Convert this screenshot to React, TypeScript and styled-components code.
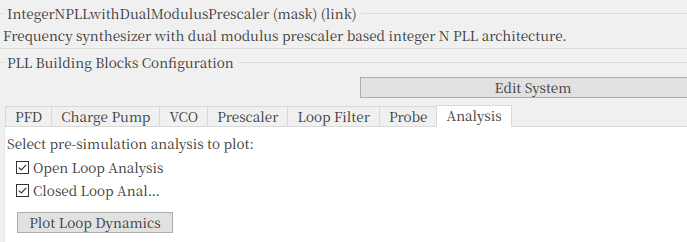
import React from "react"
import styled, { createGlobalStyle } from "styled-components"

const GlobalStyle = createGlobalStyle`
	html, body {
		margin: 0;
		padding: 0;
		background: #f0f0f0;
		overflow: hidden;
	}
	body {
		font-family: "Noto Serif CJK SC", "Liberation Serif", serif;
		font-size: 13.5px;
		color: #383838;
	}
`

const tabs = [
	"PFD",
	"Charge Pump",
	"VCO",
	"Prescaler",
	"Loop Filter",
	"Probe",
	"Analysis",
]

const Page = styled.div`
	width: 706px;
	height: 242px;
	padding-top: 4px;
	box-sizing: border-box;
	display: flex;
	flex-direction: column;
`

const GroupHeader = styled.div<{ $top?: number }>`
	display: flex;
	align-items: center;
	height: 18px;
	line-height: 18px;
	margin-top: ${(p) => p.$top ?? 0}px;
	white-space: nowrap;

	&::before {
		content: "";
		width: 5px;
		height: 1px;
		background: #dcdcdc;
		margin-right: 2px;
	}
	&::after {
		content: "";
		flex: 1;
		height: 1px;
		background: #dcdcdc;
		margin-left: 4px;
	}
`

const Description = styled.div`
	height: 18px;
	line-height: 18px;
	margin-top: 4px;
	padding-left: 3px;
	white-space: nowrap;
`

const Divider = styled.div`
	height: 1px;
	margin-top: 4px;
	background: #dcdcdc;
`

const ButtonRow = styled.div`
	display: grid;
	grid-template-columns: 360px 1fr;
	margin-top: 6px;
`

const PushButton = styled.button<{ $width?: string }>`
	font: inherit;
	letter-spacing: inherit;
	color: #383838;
	height: 21px;
	width: ${(p) => p.$width ?? "100%"};
	padding: 0;
	background: #e1e1e1;
	border: 1px solid #adadad;
	border-radius: 0;
	line-height: 19px;
	white-space: nowrap;
`

const TabArea = styled.div`
	flex: 1;
	margin-top: 7px;
	padding-left: 4px;
	display: flex;
	flex-direction: column;
`

const TabBar = styled.div`
	display: flex;
	align-items: flex-end;
	height: 21px;
	padding-left: 1px;
	position: relative;
	z-index: 1;
`

const Tab = styled.div<{ $active?: boolean }>`
	height: ${(p) => (p.$active ? 22 : 20)}px;
	line-height: 19px;
	padding: 0 9px;
	box-sizing: border-box;
	background: ${(p) => (p.$active ? "#ffffff" : "#f0f0f0")};
	border: 1px solid #d9d9d9;
	border-bottom: none;
	margin-left: -1px;
	margin-bottom: ${(p) => (p.$active ? -1 : 0)}px;
	white-space: nowrap;
	&:first-child {
		margin-left: 0;
	}
`

const Panel = styled.div`
	flex: 1;
	background: #ffffff;
	border-top: 1px solid #d9d9d9;
	border-left: 1px solid #e6e6e6;
	padding-left: 2px;
	display: flex;
	flex-direction: column;
`

const Prompt = styled.div`
	height: 18px;
	line-height: 18px;
	margin-top: 7px;
	white-space: nowrap;
`

const CheckRow = styled.label<{ $top: number }>`
	display: flex;
	align-items: center;
	height: 18px;
	line-height: 18px;
	margin-top: ${(p) => p.$top}px;
	padding-left: 9px;
	white-space: nowrap;
`

const Box = styled.span`
	width: 13px;
	height: 13px;
	box-sizing: border-box;
	border: 1px solid #333333;
	background: #ffffff;
	margin-right: 4px;
	display: flex;
	align-items: center;
	justify-content: center;
`

const BottomButton = styled.div`
	margin-top: 13px;
	padding-left: 10px;
`

const Check = ({ label, top }: { label: string; top: number }) => (
	<CheckRow $top={top}>
		<Box>
			<svg width="11" height="11" viewBox="0 0 11 11">
				<path d="M1.8 5.6 L4.3 8 L9.2 2.8" fill="none" stroke="#333" strokeWidth="1.2" />
			</svg>
		</Box>
		{label}
	</CheckRow>
)

export default function App() {
	return (
		<>
			<GlobalStyle />
			<Page>
				<GroupHeader>IntegerNPLLwithDualModulusPrescaler (mask) (link)</GroupHeader>
				<Description>
					Frequency synthesizer with dual modulus prescaler based integer N PLL architecture.
				</Description>
				<Divider />
				<GroupHeader $top={4}>PLL Building Blocks Configuration</GroupHeader>
				<ButtonRow>
					<span />
					<PushButton>Edit System</PushButton>
				</ButtonRow>
				<TabArea>
					<TabBar>
						{tabs.map((t) => (
							<Tab key={t} $active={t === "Analysis"}>
								{t}
							</Tab>
						))}
					</TabBar>
					<Panel>
						<Prompt>Select pre-simulation analysis to plot:</Prompt>
						<Check label="Open Loop Analysis" top={6} />
						<Check label="Closed Loop Anal⋯" top={5} />
						<BottomButton>
							<PushButton $width="156px">Plot Loop Dynamics</PushButton>
						</BottomButton>
					</Panel>
				</TabArea>
			</Page>
		</>
	)
}
